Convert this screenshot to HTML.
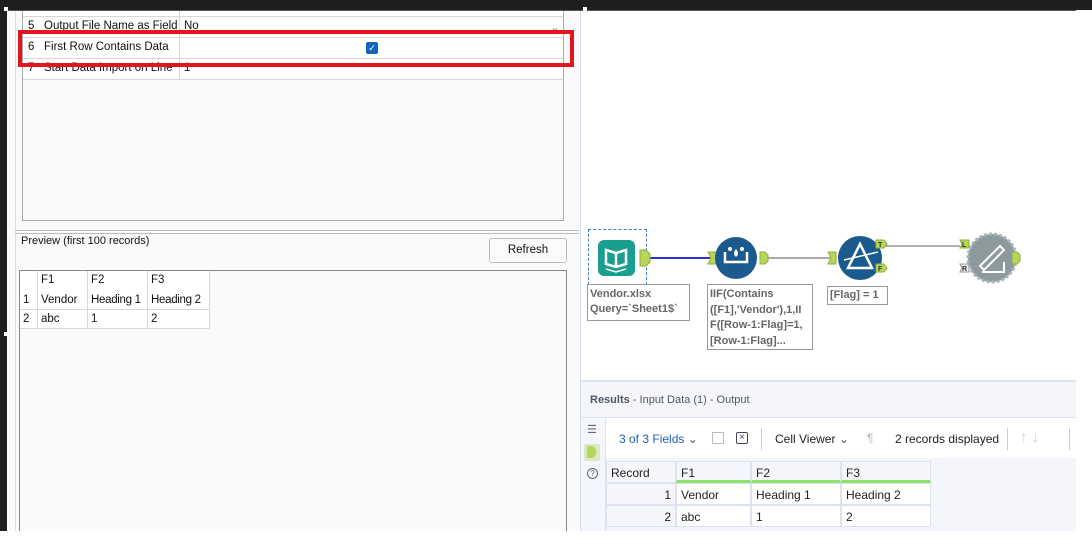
<!DOCTYPE html><html><head><style>
*{margin:0;padding:0;box-sizing:border-box}
body{width:1092px;height:546px;background:#fff;position:relative;overflow:hidden;font-family:"Liberation Sans",sans-serif;font-size:12px;color:#111}
.a{position:absolute;white-space:nowrap}
.row{position:absolute;left:23px;width:540px;height:21px;border-bottom:1px solid #d8d8d8;background:#fff;font-size:11.5px}
.row span{position:absolute;top:3px;white-space:nowrap}
.cell{position:absolute;border-right:1px solid #d8d8d8;border-bottom:1px solid #d8d8d8;height:19px;padding:3px 3px;background:#fff;white-space:nowrap;font-size:11.5px;overflow:hidden}
.rc{position:absolute;border:1px solid #dde3ee;height:22px;padding:4px 4px;font-size:12px;background:#fff;color:#222;white-space:nowrap}
</style></head><body>
<div class="a" style="left:0;top:0;width:1092px;height:10px;background:#1f1f1f"></div>
<div class="a" style="left:0;top:10px;width:1076px;height:1px;background:#555"></div>
<div class="a" style="left:0;top:0;width:7px;height:531px;background:#1f1f1f"></div>
<div class="a" style="left:4px;top:7px;width:4px;height:4px;background:#fff"></div>
<div class="a" style="left:4px;top:332px;width:4px;height:4px;background:#fff"></div>
<div class="a" style="left:583px;top:7px;width:4px;height:4px;background:#fff"></div>
<!-- left panel -->
<div class="a" style="left:7px;top:11px;width:572px;height:520px;background:#f9fafc"></div>
<div class="a" style="left:15px;top:11px;width:1px;height:520px;background:#dde"></div>
<div class="a" style="left:22px;top:11px;width:542px;height:210px;border:1px solid #aaa;border-top:none;background:#f9fafc"></div>
<div class="row" style="top:11px;height:6px"></div>
<div class="row" style="top:17px"><span style="left:5px">5</span><span style="left:21px">Output File Name as Field</span><span style="left:161px">No</span><span style="left:527px;color:#888">⌄</span></div>
<div class="row" style="top:38px"><span style="left:5px">6</span><span style="left:21px">First Row Contains Data</span>
<div class="a" style="left:343px;top:4px;width:12px;height:12px;background:#1565c0;border-radius:2px;color:#fff;font-size:9px;text-align:center;line-height:12px">✓</div></div>
<div class="row" style="top:59px"><span style="left:5px">7</span><span style="left:21px">Start Data Import on Line</span><span style="left:161px">1</span></div>
<div class="a" style="left:179px;top:11px;width:1px;height:69px;background:#d8d8d8"></div>
<div class="a" style="left:18px;top:30px;width:556px;height:37px;border:4px solid #e3141b"></div>
<div class="a" style="left:15px;top:230px;width:564px;height:1px;background:#bbb"></div>
<div class="a" style="left:15px;top:233px;width:564px;height:1px;background:#bbb"></div>
<div class="a" style="left:21px;top:235px;font-size:11px">Preview (first 100 records)</div>
<div class="a" style="left:489px;top:238px;width:78px;height:25px;border:1px solid #bbb;border-radius:3px;background:#fbfbfb;text-align:center;line-height:23px;font-size:11.5px">Refresh</div>
<div class="a" style="left:19px;top:270px;height:261px;border:1px solid #888;border-bottom:none;width:548px;background:#f9fafc"></div>
<div class="cell" style="left:20px;top:271px;width:18px;height:20px;border-bottom:none"></div>
<div class="cell" style="left:38px;top:271px;width:50px;height:20px;border-bottom:none">F1</div>
<div class="cell" style="left:88px;top:271px;width:60px;height:20px;border-bottom:none">F2</div>
<div class="cell" style="left:148px;top:271px;width:62px;height:20px;border-bottom:none">F3</div>
<div class="cell" style="left:20px;top:291px;width:18px">1</div>
<div class="cell" style="left:38px;top:291px;width:50px">Vendor</div>
<div class="cell" style="left:88px;top:291px;width:60px;letter-spacing:-0.3px">Heading 1</div>
<div class="cell" style="left:148px;top:291px;width:62px;letter-spacing:-0.3px">Heading 2</div>
<div class="cell" style="left:20px;top:310px;width:18px">2</div>
<div class="cell" style="left:38px;top:310px;width:50px">abc</div>
<div class="cell" style="left:88px;top:310px;width:60px">1</div>
<div class="cell" style="left:148px;top:310px;width:62px">2</div>
<!-- canvas -->
<div class="a" style="left:580px;top:11px;width:1px;height:520px;background:#d5dceb"></div>
<div class="a" style="left:588px;top:229px;width:59px;height:56px;border:1px dashed #3a7bd5"></div>
<div class="a" style="left:598px;top:240px;width:37px;height:36px;background:#1a9e8f;border-radius:6px"></div>
<svg class="a" style="left:598px;top:240px" width="37" height="36"><path d="M8 10 L18 13 L28 10 L28 24 L18 27 L8 24Z M18 13 L18 27" fill="none" stroke="#fff" stroke-width="2.5"/><path d="M8 29 L18 32 L28 29" fill="none" stroke="#fff" stroke-width="1.5"/></svg>
<svg class="a" style="left:580px;top:230px" width="500" height="60">
<line x1="70" y1="28" x2="130" y2="28" stroke="#2d2fd0" stroke-width="2"/>
<line x1="188" y1="28" x2="250" y2="28" stroke="#aaa" stroke-width="2"/>
<line x1="305" y1="16" x2="380" y2="16" stroke="#999" stroke-width="1.5"/>
<path d="M60 20 h6 l4 4 v8 l-4 4 h-6z" fill="#b5d65a" stroke="#8fae3a"/>
<path d="M128 22 h8 v12 h-8 l3 -6z" fill="#b5d65a" stroke="#8fae3a"/>
<path d="M180 22 h5 l3 3 v6 l-3 3 h-5z" fill="#b5d65a" stroke="#8fae3a"/>
<path d="M248 22 h8 v12 h-8 l3 -6z" fill="#b5d65a" stroke="#8fae3a"/>
<circle cx="156" cy="28" r="21" fill="#1b5a8f"/>
<path d="M145 22 v10 h22 v-10" fill="none" stroke="#fff" stroke-width="2.5"/><path d="M156 19 q-4 5 0 8 q4 -3 0 -8z" fill="#fff"/><circle cx="150" cy="19" r="2" fill="#fff"/><circle cx="162" cy="19" r="2" fill="#fff"/>
<circle cx="280" cy="28" r="22" fill="#1b5a8f"/>
<path d="M280 14 L268 38 L292 38Z" fill="none" stroke="#fff" stroke-width="2.5"/><line x1="264" y1="30" x2="298" y2="22" stroke="#fff" stroke-width="1.5"/>
<path d="M296 10 h8 l3 4 l-3 4 h-8z" fill="#b5d65a" stroke="#8fae3a"/><text x="298" y="17" font-size="7" font-weight="bold" fill="#333">T</text>
<path d="M296 34 h8 l3 4 l-3 4 h-8z" fill="#b5d65a" stroke="#8fae3a"/><text x="298" y="41" font-size="7" font-weight="bold" fill="#333">F</text>
<path d="M380 10 h9 v8 h-9 l2 -4z" fill="#b5d65a" stroke="#8fae3a"/><text x="382" y="17" font-size="7" font-weight="bold" fill="#333">L</text>
<path d="M380 34 h9 v8 h-9 l2 -4z" fill="#eee" stroke="#999"/><text x="382" y="41" font-size="7" font-weight="bold" fill="#333">R</text>
<circle cx="412" cy="28" r="24" fill="#8c9aa0" stroke="#aab4b8" stroke-width="3" stroke-dasharray="3 2"/>
<path d="M400 36 L420 16 L424 20 L404 40Z M402 42 h22 v-10" fill="none" stroke="#fff" stroke-width="2"/>
<path d="M432 22 h5 l3 3 v6 l-3 3 h-5z" fill="#b5d65a" stroke="#8fae3a"/>
</svg>
<div class="a" style="left:587px;top:284px;width:103px;height:37px;border:1px solid #999;background:#fff;padding:2px;font-size:11px;font-weight:bold;color:#666;line-height:15px">Vendor.xlsx<br>Query=`Sheet1$`</div>
<div class="a" style="left:707px;top:284px;width:106px;height:66px;border:1px solid #999;background:#fff;padding:2px;font-size:11px;font-weight:bold;color:#666;line-height:15.5px">IIF(Contains<br>([F1],'Vendor'),1,II<br>F([Row-1:Flag]=1,<br>[Row-1:Flag]...</div>
<div class="a" style="left:827px;top:286px;width:61px;height:19px;border:1px solid #999;background:#fff;padding:2px 2px;font-size:11px;font-weight:bold;color:#666">[Flag] = 1</div>
<!-- results -->
<div class="a" style="left:581px;top:380px;width:495px;height:151px;background:#f4f6fb;border-top:2px solid #dce3f0"></div>
<div class="a" style="left:590px;top:394px;font-size:11px;color:#556"><b>Results</b> - Input Data (1) - Output</div>
<div class="a" style="left:581px;top:417px;width:495px;height:1px;background:#dde3ee"></div>
<div class="a" style="left:605px;top:418px;width:1px;height:113px;background:#dde3ee"></div>
<div class="a" style="left:606px;top:418px;width:470px;height:40px;background:#fff"></div>
<div class="a" style="left:587px;top:423px;color:#667;font-size:11px">☰</div>
<div class="a" style="left:584px;top:444px;width:16px;height:17px;background:#d9e9c2;border-radius:2px"></div>
<div class="a" style="left:587px;top:446px;width:9px;height:12px;background:#b5d65a;border-radius:0 5px 5px 0"></div>
<div class="a" style="left:587px;top:468px;width:11px;height:11px;border:1px solid #667;border-radius:50%;font-size:8px;text-align:center;line-height:9px;color:#667">?</div>
<div class="a" style="left:619px;top:432px;color:#1e5fbf">3 of 3 Fields <span style="color:#555">⌄</span></div>
<div class="a" style="left:712px;top:432px;width:12px;height:12px;border:1px solid #bbb"></div>
<div class="a" style="left:736px;top:432px;width:12px;height:12px;border:1.5px solid #445;border-radius:2px;font-size:10px;line-height:9px;text-align:center;color:#445">×</div>
<div class="a" style="left:761px;top:428px;width:1px;height:22px;background:#ccc"></div>
<div class="a" style="left:775px;top:432px;color:#222">Cell Viewer <span style="color:#555">⌄</span></div>
<div class="a" style="left:867px;top:431px;color:#bbb">¶</div>
<div class="a" style="left:895px;top:432px;color:#222">2 records displayed</div>
<div class="a" style="left:1007px;top:428px;width:1px;height:22px;background:#ccc"></div>
<div class="a" style="left:1020px;top:429px;color:#ccc;font-size:15px">↑ ↓</div>
<div class="a" style="left:1069px;top:428px;width:1px;height:22px;background:#ccc"></div>
<div class="rc" style="left:606px;top:461px;width:70px;background:#f4f6fb">Record</div>
<div class="rc" style="left:676px;top:461px;width:75px;border-bottom:3px solid #8fe36a;background:#f4f6fb">F1</div>
<div class="rc" style="left:751px;top:461px;width:90px;border-bottom:3px solid #8fe36a;background:#f4f6fb">F2</div>
<div class="rc" style="left:841px;top:461px;width:90px;border-bottom:3px solid #8fe36a;background:#f4f6fb">F3</div>
<div class="rc" style="left:606px;top:483px;width:70px;text-align:right;background:#f4f6fb">1</div>
<div class="rc" style="left:676px;top:483px;width:75px">Vendor</div>
<div class="rc" style="left:751px;top:483px;width:90px">Heading 1</div>
<div class="rc" style="left:841px;top:483px;width:90px">Heading 2</div>
<div class="rc" style="left:606px;top:505px;width:70px;text-align:right;background:#f4f6fb">2</div>
<div class="rc" style="left:676px;top:505px;width:75px">abc</div>
<div class="rc" style="left:751px;top:505px;width:90px">1</div>
<div class="rc" style="left:841px;top:505px;width:90px">2</div>
<div class="a" style="left:0;top:531px;width:1092px;height:15px;background:#fff"></div>
</body></html>
